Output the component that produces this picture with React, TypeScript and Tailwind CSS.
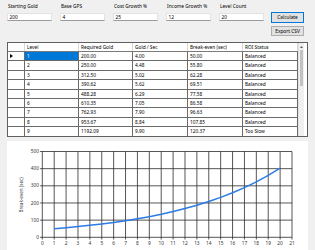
import React from 'react';

const fields = [
  { label: 'Starting Gold', value: '200' },
  { label: 'Base GPS', value: '4' },
  { label: 'Cost Growth %', value: '25' },
  { label: 'Income Growth %', value: '12' },
  { label: 'Level Count', value: '20' },
];

type Row = { level: number; gold: string; gps: string; be: string; roi: string };

const rows: Row[] = Array.from({ length: 9 }, (_, i) => {
  const gold = 200 * Math.pow(1.25, i);
  const gps = 4 * Math.pow(1.12, i);
  const be = gold / gps;
  return {
    level: i + 1,
    gold: (Math.floor(gold * 100) / 100).toFixed(2),
    gps: gps.toFixed(2),
    be: be.toFixed(2),
    roi: be > 120 ? 'Too Slow' : 'Balanced',
  };
});

const cols = ['Level', 'Required Gold', 'Gold / Sec', 'Break-even (sec)', 'ROI Status'];
const colW = ['w-[54px]', 'w-[54px]', 'w-[55px]', 'w-[55px]', 'w-[55px]'];

function DataGrid() {
  return (
    <div className="mx-[7px] h-[95px] border border-[#5f5f5f] bg-white flex overflow-hidden">
      <div className="flex flex-col">
        <div className="flex h-[9px] border-b border-[#7a7a7a]">
          <div className="w-[17px] border-r border-[#d8d8d8]" />
          {cols.map((c, i) => (
            <div key={c} className={`${colW[i]} border-r border-[#d8d8d8] pl-[2px] leading-[8px]`}>
              {c}
            </div>
          ))}
        </div>
        {rows.map((r, idx) => {
          const cells = [String(r.level), r.gold, r.gps, r.be, r.roi];
          return (
            <div key={r.level} className="flex h-[9.4px] border-b border-[#6a6a6a]">
              <div className="w-[17px] border-r border-[#6a6a6a] flex items-center pl-[2px]">
                {idx === 0 ? (
                  <svg width="3" height="4" viewBox="0 0 3 4">
                    <path d="M0 0 L3 2 L0 4 Z" fill="#000" />
                  </svg>
                ) : null}
              </div>
              {cells.map((v, i) => (
                <div
                  key={i}
                  className={`${colW[i]} border-r border-[#6a6a6a] pl-[2px] leading-[8.4px] ${
                    idx === 0 && i === 0 ? 'bg-[#0078d7] text-white' : ''
                  }`}
                >
                  {v}
                </div>
              ))}
            </div>
          );
        })}
      </div>
      <div className="w-[6px] bg-[#f0f0f0] border-l border-[#e2e2e2] flex flex-col items-center">
        <div className="h-[7px] flex items-center justify-center">
          <svg width="3" height="2" viewBox="0 0 3 2">
            <path d="M0 2 L1.5 0 L3 2 Z" fill="#606060" />
          </svg>
        </div>
        <div className="w-[3px] h-[36px] bg-[#c2c2c2]" />
      </div>
    </div>
  );
}

function Chart() {
  const W = 298;
  const H = 109;
  const L = 35.3;
  const R = 285;
  const T = 10.5;
  const B = 96.3;
  const sx = (v: number) => L + (v * (R - L)) / 21;
  const sy = (v: number) => B - (v * (B - T)) / 500;
  const pts = Array.from({ length: 20 }, (_, i) => {
    const be = 50 * Math.pow(1.25 / 1.12, i);
    return `${sx(i + 1).toFixed(2)},${sy(be).toFixed(2)}`;
  }).join(' ');
  const xs = Array.from({ length: 22 }, (_, i) => i);
  const ys = [0, 100, 200, 300, 400, 500];

  return (
    <div className="mx-[7px] mt-[4px] h-[109px] bg-white">
      <svg width={W} height={H} viewBox={`0 0 ${W} ${H}`} className="block">
        {xs.map((v) => (
          <line key={'v' + v} x1={sx(v)} y1={T} x2={sx(v)} y2={B + 2.2} stroke="#2b2b2b" strokeWidth="0.8" />
        ))}
        {ys.map((v) => (
          <line key={'h' + v} x1={L - 2.2} y1={sy(v)} x2={R} y2={sy(v)} stroke="#2b2b2b" strokeWidth="0.8" />
        ))}
        {ys.map((v) => (
          <text key={'yl' + v} x={L - 3.3} y={sy(v) + 1.6} textAnchor="end" fontSize="4.8" fill="#333">
            {v}
          </text>
        ))}
        {xs.map((v) => (
          <text key={'xl' + v} x={sx(v)} y={104.4} textAnchor="middle" fontSize="4.8" fill="#333">
            {v}
          </text>
        ))}
        <text x={0} y={0} fontSize="4.6" fill="#333" textAnchor="middle" transform="translate(16 54) rotate(-90)">
          Break-even (sec)
        </text>
        <polyline points={pts} fill="none" stroke="#2a7be6" strokeWidth="1.5" />
      </svg>
    </div>
  );
}

export default function App() {
  return (
    <div
      className="w-[315px] h-[250px] bg-[#f0f0f0] overflow-hidden text-[4.8px] text-black"
      style={{ fontFamily: "'Segoe UI', 'Noto Sans', sans-serif" }}
    >
      <div className="h-[42px] flex px-[7px]">
        {fields.map((f, i) => (
          <div key={f.label} className={`w-[45px] flex flex-col pt-[3px] ${i > 0 ? 'ml-[8px]' : ''}`}>
            <div className="h-[7px] leading-[7px] pl-[1px]">{f.label}</div>
            <div className="mt-[2.7px] h-[8.6px] bg-white border border-[#e3e3e3] border-b-[#9a9a9a] pl-[1.5px] leading-[7px]">
              {f.value}
            </div>
          </div>
        ))}
        <div className="ml-[7px] flex flex-col pt-[12px]">
          <button
            type="button"
            className="w-[33px] h-[11px] bg-[#e1e1e1] border border-[#0078d7] leading-[9px] text-center"
          >
            Calculate
          </button>
          <button
            type="button"
            className="mt-[3px] w-[33px] h-[10px] bg-[#e1e1e1] border border-[#adadad] leading-[8px] text-center"
          >
            Export CSV
          </button>
        </div>
      </div>
      <DataGrid />
      <Chart />
    </div>
  );
}
